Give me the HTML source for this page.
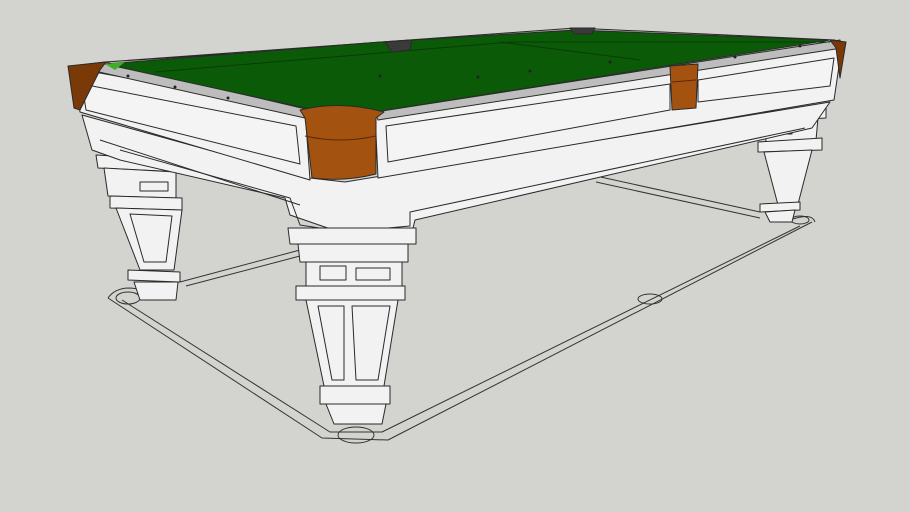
<!DOCTYPE html>
<html><head><meta charset="utf-8"><style>
html,body{margin:0;padding:0;background:#d3d4cf;}
svg{display:block}
</style></head><body>
<svg width="910" height="512" viewBox="0 0 910 512" xmlns="http://www.w3.org/2000/svg" stroke="#2a2a2a" stroke-width="1" stroke-linejoin="round">
<rect width="910" height="512" fill="#d3d4cf" stroke="none"/>
<!-- floor outline -->
<g fill="none" stroke="#333">
<path d="M108,298 L322,438 L388,440 L812,222"/>
<path d="M122,300 L330,432 L382,432 L800,226"/>
<path d="M108,298 Q115,288 130,288 L150,290"/>
<path d="M180,282 L300,250"/><path d="M186,286 L300,256"/>
<path d="M410,218 L568,175"/><path d="M412,212 L568,170"/>
<path d="M596,176 L760,212"/><path d="M596,182 L760,218"/>
<path d="M790,220 Q812,212 815,222"/>
<ellipse cx="356" cy="435" rx="18" ry="8"/>
<ellipse cx="650" cy="299" rx="12" ry="5"/>
<ellipse cx="128" cy="298" rx="12" ry="6"/>
<ellipse cx="800" cy="220" rx="9" ry="4"/>
</g>
<!-- back small leg -->
<polygon points="568,163 596,161 594,178 572,180" fill="#f0f0f0"/>
<!-- right leg -->
<g fill="#f2f2f2">
<polygon points="760,112 826,108 826,118 760,122"/>
<polygon points="765,122 818,118 816,140 766,142"/>
<polygon points="758,142 822,138 822,150 758,152"/>
<polygon points="764,152 812,150 798,204 778,205"/>
<polygon points="760,204 800,202 800,210 760,212"/>
<polygon points="765,212 795,210 792,222 770,222"/>
<rect x="770" y="126" width="22" height="8" fill="none"/>
</g>
<!-- left leg -->
<g fill="#f2f2f2">
<polygon points="96,155 180,160 182,172 98,168"/>
<polygon points="104,168 176,172 176,198 108,196"/>
<polygon points="110,196 182,198 182,210 110,208"/>
<polygon points="116,208 182,210 174,270 140,270"/>
<polygon points="128,270 180,272 180,282 128,280"/>
<polygon points="134,282 178,282 176,300 140,300"/>
<rect x="140" y="182" width="28" height="9" fill="none"/>
<polygon points="130,214 172,216 166,262 144,262" fill="none"/>
</g>
<!-- skirt / apron -->
<polygon points="82,115 310,178 345,182 830,102 812,128 415,220 412,232 348,235 290,215 285,198 120,160 92,150" fill="#f2f2f2"/>
<path d="M120,150 L290,198 L300,225 L345,232 L410,226 L410,212 L805,128" fill="none"/>
<path d="M100,140 L300,205" fill="none"/>
<!-- front leg -->
<g fill="#f2f2f2">
<polygon points="288,228 416,228 416,244 290,244"/>
<polygon points="298,244 408,244 408,262 300,262"/>
<polygon points="306,262 402,262 402,286 306,286"/>
<polygon points="296,286 405,286 405,300 296,300"/>
<polygon points="306,300 398,300 384,386 324,386"/>
<polygon points="320,386 390,386 390,404 320,404"/>
<polygon points="326,404 386,404 382,424 334,424"/>
<rect x="320" y="266" width="26" height="14" fill="none"/>
<rect x="356" y="268" width="34" height="12" fill="none"/>
<polygon points="318,306 344,306 344,380 332,380" fill="none"/>
<polygon points="352,306 390,306 378,380 356,380" fill="none"/>
</g>
<!-- left rail face -->
<polygon points="72,68 305,110 310,180 80,112" fill="#f2f2f2"/>
<polygon points="82,84 296,126 300,164 86,110" fill="#f4f4f4"/>
<!-- right rail face -->
<polygon points="375,112 842,46 834,100 378,178" fill="#f2f2f2"/>
<polygon points="386,126 670,84 670,110 388,162" fill="#f4f4f4"/>
<polygon points="698,80 834,58 830,86 698,102" fill="#f4f4f4"/>
<!-- rail top strips -->
<polygon points="72,66 105,62 310,110 305,118" fill="#bdbdbd"/>
<polygon points="375,112 840,40 842,48 378,120" fill="#bdbdbd"/>
<polygon points="105,62 575,28 835,40 572,32" fill="#bdbdbd"/>
<!-- felt -->
<polygon points="105,64 380,42 575,30 830,40 375,112 305,108" fill="#0b5a08"/>
<path d="M155,72 L510,42 L830,42 M500,42 L640,60" fill="none" stroke="#063d05"/>
<polygon points="105,64 125,62 115,70" fill="#3fae2a" stroke="none"/>
<!-- corner pockets -->
<polygon points="68,66 106,62 100,70 80,110 74,108" fill="#7a3a08"/>
<polygon points="830,40 846,42 840,78 836,48" fill="#7a3a08"/>
<polygon points="385,42 412,40 410,50 392,52" fill="#3a3a3a"/>
<polygon points="570,28 595,28 592,34 574,34" fill="#3a3a3a"/>
<!-- front pocket -->
<path d="M300,110 Q340,100 384,112 L376,118 L376,174 Q345,182 312,178 L305,118 Z" fill="#a3520f"/>
<path d="M305,136 Q340,144 376,136" fill="none" stroke="#5a2a06"/>
<!-- middle pocket -->
<polygon points="670,66 698,64 696,108 672,110" fill="#a3520f"/>
<path d="M672,82 L696,80" fill="none" stroke="#5a2a06"/>
<g fill="#222" stroke="none">
<circle cx="128" cy="76" r="1.5"/><circle cx="175" cy="87" r="1.5"/><circle cx="228" cy="98" r="1.5"/>
<circle cx="380" cy="76" r="1.5"/><circle cx="478" cy="77" r="1.5"/><circle cx="530" cy="71" r="1.5"/>
<circle cx="610" cy="62" r="1.5"/><circle cx="735" cy="57" r="1.5"/><circle cx="800" cy="46" r="1.5"/>
</g>
</svg>
</body></html>
